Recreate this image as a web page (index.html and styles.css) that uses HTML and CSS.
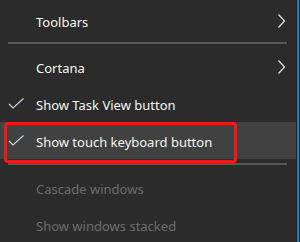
FILE: index.html
```html
<!DOCTYPE html>
<html>
<head>
<meta charset="utf-8">
<link rel="stylesheet" href="styles.css">
</head>
<body>
<div class="screen">
  <div class="menu">
    <div class="item">
      <span class="icon"></span>
      <span class="label">Toolbars</span>
      <svg class="chev" width="9" height="16" viewBox="0 0 9 16"><polyline points="1.5,1.5 7.5,8 1.5,14.5" fill="none" stroke="#dcdcdc" stroke-width="1.3"/></svg>
    </div>
    <div class="sep"></div>
    <div class="item">
      <span class="icon"></span>
      <span class="label">Cortana</span>
      <svg class="chev" width="9" height="16" viewBox="0 0 9 16"><polyline points="1.5,1.5 7.5,8 1.5,14.5" fill="none" stroke="#dcdcdc" stroke-width="1.3"/></svg>
    </div>
    <div class="item">
      <span class="icon"><svg width="16" height="11" viewBox="0 0 16 11"><polyline points="1,6 5,10 15.5,0.5" fill="none" stroke="#c8d6e6" stroke-width="1.1"/></svg></span>
      <span class="label">Show Task View button</span>
    </div>
    <div class="item hover">
      <span class="icon"><svg width="16" height="11" viewBox="0 0 16 11"><polyline points="1,6 5,10 15.5,0.5" fill="none" stroke="#c8d6e6" stroke-width="1.1"/></svg></span>
      <span class="label">Show touch keyboard button</span>
      <div class="redbox"></div>
    </div>
    <div class="sep sep2"></div>
    <div class="item disabled">
      <span class="icon"></span>
      <span class="label">Cascade windows</span>
    </div>
    <div class="item disabled">
      <span class="icon"></span>
      <span class="label">Show windows stacked</span>
    </div>
  </div>
  <div class="edge"></div>
</div>
</body>
</html>
```
FILE: styles.css
```css
html, body {
  margin: 0;
  padding: 0;
  background: #2b2b2b;
}
.screen {
  display: flex;
  width: 300px;
  height: 242px;
  overflow: hidden;
}
.menu {
  width: 296px;
  background: #2b2b2b;
  padding-top: 2px;
  font-family: "Noto Sans", "Open Sans", sans-serif;
  font-size: 13px;
  color: #f4f4f4;
}
.item {
  position: relative;
  display: flex;
  align-items: center;
  height: 37px;
  padding-left: 8px;
  padding-right: 10px;
}
.icon {
  width: 28px;
  display: flex;
  align-items: center;
}
.label {
  flex: 1;
  white-space: nowrap;
  padding-top: 2px;
}
.chev {
  display: block;
}
.sep {
  height: 2px;
  background: #565656;
  margin: 3px 9px 4px 8px;
}
.sep2 {
  margin-top: 4px;
}
.hover {
  background: #414141;
}
.disabled .label {
  color: #6b6b6b;
}
.redbox {
  position: absolute;
  left: 4px;
  top: 0;
  width: 233px;
  height: 41px;
  box-sizing: border-box;
  border: 3px solid #f01818;
  border-radius: 4px;
}
.edge {
  width: 4px;
  display: flex;
  border-left: 1px solid #232323;
  box-sizing: border-box;
}
.edge::before {
  content: "";
  width: 2px;
  background: #2a79b4;
}
```
